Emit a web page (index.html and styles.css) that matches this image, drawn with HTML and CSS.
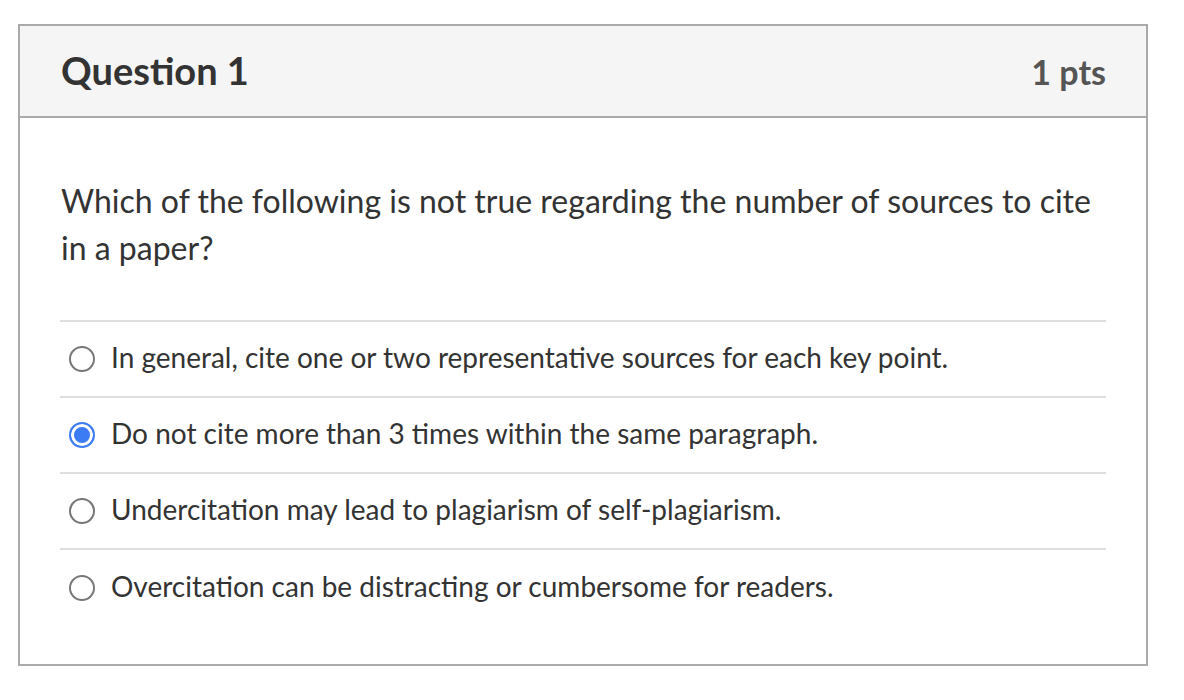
FILE: index.html
```html
<!DOCTYPE html>
<html>
<head>
<meta charset="utf-8">
<link rel="stylesheet" href="styles.css">
</head>
<body>
<div class="card">
  <div class="header">
    <div class="title">Question 1</div>
    <div class="pts">1 pts</div>
  </div>
  <div class="body">
    <div class="question">Which of the following is not true regarding the number of sources to cite in a paper?</div>
    <div class="answers">
      <div class="answer"><span class="radio"></span><span class="label">In general, cite one or two representative sources for each key point.</span></div>
      <div class="answer"><span class="radio checked"></span><span class="label">Do not cite more than 3 times within the same paragraph.</span></div>
      <div class="answer"><span class="radio"></span><span class="label">Undercitation may lead to plagiarism of self-plagiarism.</span></div>
      <div class="answer"><span class="radio"></span><span class="label">Overcitation can be distracting or cumbersome for readers.</span></div>
    </div>
  </div>
</div>
</body>
</html>
```

FILE: styles.css
```css
html, body {
  margin: 0;
  padding: 0;
  background: #fff;
}
body {
  padding: 24px 0 0 18px;
  font-family: Lato, "Noto Sans", sans-serif;
  color: #333333;
}
.card {
  box-sizing: border-box;
  width: 1130px;
  height: 642px;
  border: 2px solid #aaaaaa;
}
.header {
  box-sizing: border-box;
  height: 92px;
  background: #f5f5f5;
  border-bottom: 2px solid #aaaaaa;
  display: flex;
  align-items: center;
  justify-content: space-between;
  padding: 0 40px 0 41px;
}
.title {
  font-weight: 700;
  font-size: 38px;
  color: #333333;
  margin-top: -2px;
}
.pts {
  font-weight: 700;
  font-size: 34px;
  color: #555555;
  margin-top: 0;
}
.body {
  padding: 59px 40px 0 40px;
}
.question {
  font-size: 32px;
  line-height: 47px;
  padding-left: 1px;
  margin-bottom: 49px;
}
.answers {
  border-top: 2px solid #dedede;
}
.answer {
  box-sizing: border-box;
  height: 76px;
  display: flex;
  align-items: center;
  border-bottom: 2px solid #dedede;
  padding-left: 9px;
}
.answer:last-child {
  border-bottom: none;
}
.radio {
  box-sizing: border-box;
  width: 26px;
  height: 26px;
  border-radius: 50%;
  border: 2px solid #777777;
  margin-right: 16px;
  flex: none;
}
.radio.checked {
  border: 2px solid #3b7cf5;
  background: #3b7cf5;
  box-shadow: inset 0 0 0 3px #fff;
}
.label {
  font-size: 28px;
  padding-bottom: 4px;
}
```
